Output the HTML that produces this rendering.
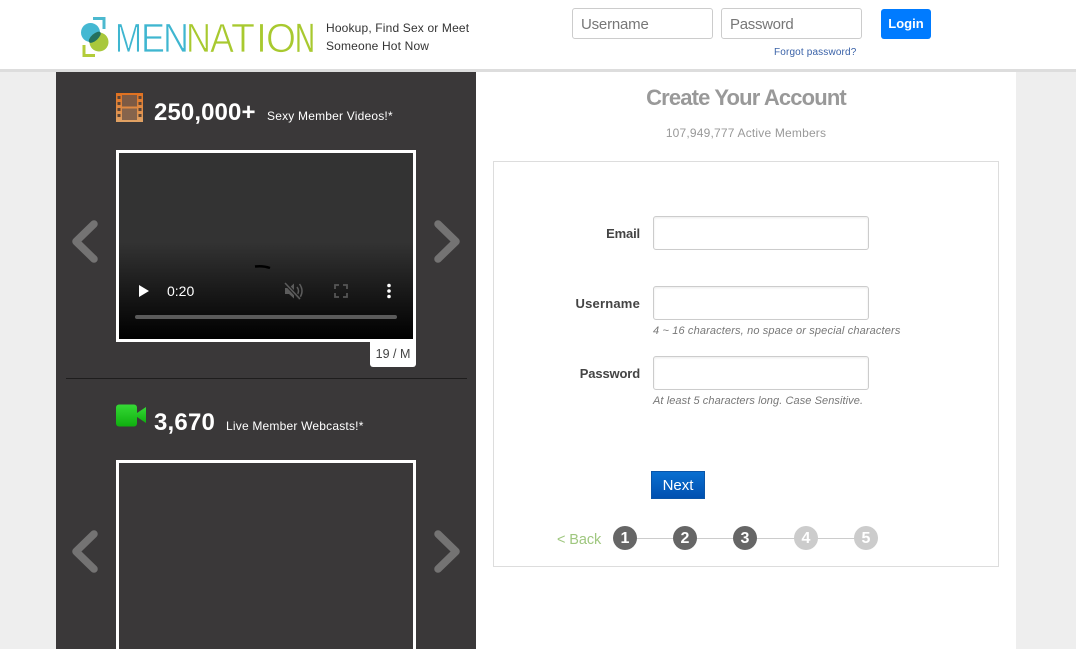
<!DOCTYPE html>
<html><head><meta charset="utf-8"><title>MenNation</title>
<style>
*{box-sizing:border-box}
html,body{margin:0;padding:0;width:1076px;height:649px;overflow:hidden;background:#eee;font-family:"Liberation Sans",sans-serif}
.a{position:absolute;white-space:nowrap}
.inp{position:absolute;background:#fff;border:1px solid #ccc;border-radius:3px}
.hd{box-shadow:inset 0 1px 2px rgba(0,0,0,.08)}
.c{position:absolute;top:526px;width:24px;height:24px;border-radius:50%;color:#fff;font:bold 16px/25px "Liberation Sans",sans-serif;text-align:center}
.lab{position:absolute;width:120px;left:520px;text-align:right;font:bold 13px/18px "Liberation Sans",sans-serif;color:#444}
.hint{position:absolute;left:653px;font:italic 11px/14px "Liberation Sans",sans-serif;color:#777;white-space:nowrap}
</style></head><body>
<div class="a" style="left:0;top:0;width:1076px;height:72px;background:#fff;border-bottom:3px solid #ddd"></div>
<svg class="a" style="left:78px;top:14px" width="240" height="48" viewBox="78 14 240 48">
<path d="M93 18.500H104V29" fill="none" stroke="#4cb9cf" stroke-width="3"/>
<path d="M84 45V55.500H95" fill="none" stroke="#b3cc3a" stroke-width="3"/>
<circle cx="90.500" cy="32.500" r="9.500" fill="#45b8d2"/>
<circle cx="99" cy="42" r="9.500" fill="#a9c83c"/>
<ellipse cx="94.750" cy="37.250" rx="7.500" ry="3.300" transform="rotate(-42 94.750 37.250)" fill="#24705f"/>
<g font-family="Liberation Sans" font-size="41" stroke="#fff" stroke-width=".8">
<text x="115" y="52" textLength="27" lengthAdjust="spacingAndGlyphs" fill="#3fb6d0">M</text>
<text x="141" y="52" textLength="24" lengthAdjust="spacingAndGlyphs" fill="#3fb6d0">E</text>
<text x="163" y="52" textLength="26" lengthAdjust="spacingAndGlyphs" fill="#3fb6d0">N</text>
<text x="186" y="52" textLength="25" lengthAdjust="spacingAndGlyphs" fill="#a8c92f">N</text>
<text x="210" y="52" textLength="24" lengthAdjust="spacingAndGlyphs" fill="#a8c92f">A</text>
<text x="231" y="52" textLength="24" lengthAdjust="spacingAndGlyphs" fill="#a8c92f">T</text>
<text x="256" y="52" textLength="11" lengthAdjust="spacingAndGlyphs" fill="#a8c92f">I</text>
<text x="266" y="52" textLength="30" lengthAdjust="spacingAndGlyphs" fill="#a8c92f">O</text>
<text x="295" y="52" textLength="20" lengthAdjust="spacingAndGlyphs" fill="#a8c92f" stroke-width=".2">N</text>
</g>
</svg>
<div class="a" style="left:326px;top:19px;font-size:12px;line-height:18px;color:#333;letter-spacing:.16px">Hookup, Find Sex or Meet<br>Someone Hot Now</div>
<div class="inp" style="left:572px;top:8px;width:141px;height:31px"></div>
<div class="a" style="left:581px;top:15px;font-size:15px;line-height:19px;color:#777;letter-spacing:-.2px">Username</div>
<div class="inp" style="left:721px;top:8px;width:141px;height:31px"></div>
<div class="a" style="left:730px;top:15px;font-size:15px;line-height:19px;color:#777;letter-spacing:-.3px">Password</div>
<div class="a" style="left:881px;top:9px;width:50px;height:30px;background:#007bff;border-radius:3px;color:#fff;font-weight:bold;font-size:13px;line-height:30px;text-align:center">Login</div>
<div class="a" style="left:774px;top:46px;font-size:10px;line-height:13px;color:#3a62a8;letter-spacing:.15px">Forgot password?</div>

<div class="a" style="left:56px;top:72px;width:420px;height:577px;background:#3a3839"></div>
<div class="a" style="left:476px;top:72px;width:540px;height:577px;background:#fff"></div>

<svg class="a" style="left:116px;top:93px" width="27" height="29" viewBox="0 0 27 29">
<defs><linearGradient id="o" x1="0" y1="0" x2="0" y2="1"><stop offset="0" stop-color="#e0701f"/><stop offset="1" stop-color="#e0a265"/></linearGradient></defs>
<rect width="27" height="29" fill="url(#o)"/>
<rect x="6" y="2" width="15" height="11.500" fill="#7d5a44"/><rect x="6" y="15.500" width="15" height="11.500" fill="#86644c"/>
<g fill="#5a4436"><rect x="1.500" y="3" width="3" height="3"/><rect x="1.500" y="9" width="3" height="3"/><rect x="1.500" y="15" width="3" height="3"/><rect x="1.500" y="21" width="3" height="3"/><rect x="22.500" y="3" width="3" height="3"/><rect x="22.500" y="9" width="3" height="3"/><rect x="22.500" y="15" width="3" height="3"/><rect x="22.500" y="21" width="3" height="3"/></g>
</svg>
<div class="a" style="left:154px;top:98px;font-size:24px;line-height:30px;font-weight:bold;color:#fff;letter-spacing:.1px">250,000+</div>
<div class="a" style="left:267px;top:108px;font-size:12px;line-height:16px;color:#fff;letter-spacing:.2px">Sexy Member Videos!*</div>

<div class="a" style="left:116px;top:150px;width:300px;height:192px;border:3px solid #fff;background:linear-gradient(#333 0,#333 48%,#000 100%)"></div>
<svg class="a" style="left:119px;top:153px" width="294" height="186" viewBox="119 153 294 186">
<path d="M255 266.500q8-1 15 1.500" fill="none" stroke="#000" stroke-width="2.500"/>
<path d="M139 285V297L149 291Z" fill="#fff"/>
<path d="M285 288h4l5-4.500v15l-5-4.500h-4z" fill="#5c5c5c"/><path d="M297 287q3 4 0 8M299.500 284q5 7 0 14" stroke="#5c5c5c" stroke-width="1.500" fill="none"/><path d="M285 283l15 16" stroke="#1c1c1c" stroke-width="3.500"/><path d="M285 283l15 16" stroke="#5c5c5c" stroke-width="1.500"/>
<path d="M335 289v-4h4M343 285h4v4M347 293v4h-4M339 297h-4v-4" fill="none" stroke="#555" stroke-width="1.800"/>
<circle cx="389" cy="285.500" r="1.800" fill="#fff"/><circle cx="389" cy="291" r="1.800" fill="#fff"/><circle cx="389" cy="296.500" r="1.800" fill="#fff"/>
<rect x="135" y="315" width="262" height="4" rx="2" fill="#5a5a5a"/>
<text x="167" y="296" font-family="Liberation Sans" font-size="14" fill="#fff">0:20</text>
</svg>
<div class="a" style="left:370px;top:342px;width:46px;height:25px;background:#fff;border-radius:0 0 3px 3px;color:#444;font-size:12.500px;line-height:25px;text-align:center">19 / M</div>
<div class="a" style="left:66px;top:378px;width:401px;height:1px;background:#1e1d1d"></div>

<svg class="a" style="left:116px;top:404px" width="31" height="23" viewBox="0 0 31 23">
<defs><linearGradient id="g" x1="0" y1="0" x2="0" y2="1"><stop offset="0" stop-color="#35d935"/><stop offset="1" stop-color="#0fae0f"/></linearGradient></defs>
<rect width="21" height="22" y="0.500" rx="3" fill="url(#g)"/><path d="M21 9L30 3V19L21 13Z" fill="url(#g)"/>
</svg>
<div class="a" style="left:154px;top:408px;font-size:24px;line-height:30px;font-weight:bold;color:#fff;letter-spacing:.2px">3,670</div>
<div class="a" style="left:226px;top:418px;font-size:12px;line-height:16px;color:#fff;letter-spacing:.2px">Live Member Webcasts!*</div>
<div class="a" style="left:116px;top:460px;width:300px;height:189px;border:3px solid #fff;border-bottom:0"></div>

<svg class="a" style="left:56px;top:200px" width="420" height="400" viewBox="56 200 420 400" fill="none" stroke="#747373" stroke-width="7.500" stroke-linecap="round" stroke-linejoin="round">
<path d="M94 224L76 241.500L94 259"/><path d="M438 224L456 241.500L438 259"/>
<path d="M94 534L76 551.500L94 569"/><path d="M438 534L456 551.500L438 569"/>
</svg>

<div class="a" style="left:476px;top:84px;width:540px;text-align:center;font-size:22px;line-height:28px;font-weight:bold;color:#999;letter-spacing:-.85px">Create Your Account</div>
<div class="a" style="left:476px;top:125px;width:540px;text-align:center;font-size:12px;line-height:17px;color:#999;letter-spacing:.19px">107,949,777 Active Members</div>
<div class="a" style="left:493px;top:161px;width:506px;height:406px;border:1px solid #ddd"></div>

<div class="lab" style="top:225px;letter-spacing:-.15px">Email</div>
<div class="inp hd" style="left:653px;top:216px;width:216px;height:34px"></div>
<div class="lab" style="top:295px;letter-spacing:.2px">Username</div>
<div class="inp hd" style="left:653px;top:286px;width:216px;height:34px"></div>
<div class="hint" style="top:324px;letter-spacing:.14px">4 ~ 16 characters, no space or special characters</div>
<div class="lab" style="top:365px;letter-spacing:-.15px">Password</div>
<div class="inp hd" style="left:653px;top:356px;width:216px;height:34px"></div>
<div class="hint" style="top:394px;letter-spacing:.08px">At least 5 characters long. Case Sensitive.</div>

<div class="a" style="left:651px;top:471px;width:54px;height:28px;background:linear-gradient(#0a6fd0,#0050b0);border:1px solid #0a55a8;color:#fff;font-size:15px;line-height:27px;text-align:center">Next</div>
<div class="a" style="left:557px;top:531px;font-size:14.500px;line-height:18px;color:#9fc77f;letter-spacing:-.1px">&lt; Back</div>
<div class="a" style="left:625px;top:538px;width:241px;height:1px;background:#ccc"></div>
<div class="c" style="left:613px;background:#666">1</div>
<div class="c" style="left:673px;background:#666">2</div>
<div class="c" style="left:733px;background:#666">3</div>
<div class="c" style="left:794px;background:#ccc">4</div>
<div class="c" style="left:854px;background:#ccc">5</div>
</body></html>
